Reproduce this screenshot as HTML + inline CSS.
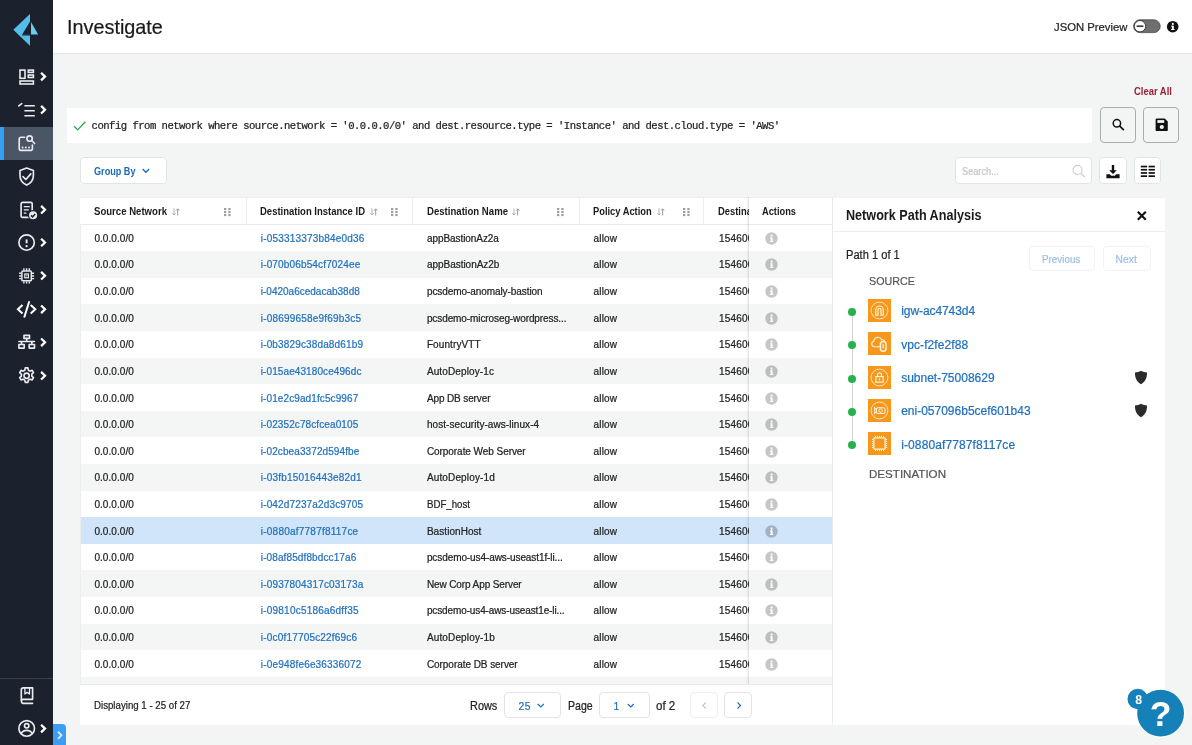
<!DOCTYPE html>
<html lang="en">
<head>
<meta charset="utf-8">
<title>Investigate</title>
<style>
*{box-sizing:border-box;margin:0;padding:0}
html,body{width:1192px;height:745px;overflow:hidden}
body{font-family:"Liberation Sans",sans-serif;background:#f3f5f5;color:#1f1f1f;position:relative;font-size:10px;will-change:transform}
svg{display:block}
#side{position:absolute;left:0;top:0;width:53px;height:745px;background:#1b222e}
#side .act{position:absolute;left:0;top:126.5px;width:53px;height:33.3px;background:#4a5566;border-left:4px solid #37a0f5}
#side svg{position:absolute}
#side .div{position:absolute;left:0;top:678px;width:53px;height:1px;background:#3a414c}
#tab{position:absolute;left:53px;top:724px;width:13px;height:21px;background:#3b9df3;border-radius:0 4px 0 0}
#tab svg{position:absolute;left:0;top:0}
#head{position:absolute;left:53px;top:0;width:1139px;height:54px;background:#fff;border-bottom:1px solid #e4e6e6}
#title{position:absolute;left:67px;top:14px;font-size:20.5px;line-height:24px;color:#1a1a1a;white-space:nowrap}
.t{position:absolute;white-space:nowrap;line-height:1;-webkit-text-stroke:0.22px currentColor}
.card{position:absolute;background:#fff}
.btn{position:absolute;background:#fff;border:1px solid #e1e4e5;border-radius:4px}
.btn svg{position:absolute}
#tbl{position:absolute;left:80px;top:197px;width:752px;height:528px;background:#fff;overflow:hidden}
#thead{position:absolute;left:0;top:0;width:752px;height:28px;border-top:1px solid #eceeee;border-bottom:1px solid #e9ebeb;background:#fff}
.row{position:absolute;left:0;width:752px;height:26.62px;border-left:1px solid #eceeee}
.row.alt{background:#f4f5f5}
.row.sel{background:#d0e5f9}
.c5{position:absolute;left:637px;top:0;width:31.6px;height:488px;overflow:hidden}
.row .inf{position:absolute;left:684.1px;top:7.4px}
.th{position:absolute;top:0;height:26px;border-right:1px solid #eceeee}
.th .srt{position:absolute;top:10.3px}
.th .grp{position:absolute;top:9.8px}
#actcol{position:absolute;left:668px;top:0;width:84px;height:487px;border-left:1px solid rgba(0,0,0,0.10);box-shadow:-1px 0 2px rgba(0,0,0,0.05)}
#actcol:before{content:"";position:absolute;left:0;top:1px;width:84px;height:26px;background:#fff}
#foot{position:absolute;left:0;top:487px;width:752px;height:41px;background:#fff;border-top:1px solid #e9ebeb}
#panel{position:absolute;left:832px;top:197px;width:333px;height:528px;background:#fff;border:1px solid #fff;border-left-color:#e9ebeb;border-top-color:#f1f3f3}
#panel svg{position:absolute}
#help{position:absolute}

</style>
</head>
<body>
<div id="side">
  <div class="act"></div>
  <div class="div"></div>
  <svg width="53" height="745" viewBox="0 0 53 745" style="left:0;top:0">
    <!-- logo -->
    <polygon points="13.3,29.8 30.2,13.7 30.2,46.1" fill="#55bdea"/>
    <polygon points="30.2,21.3 22.2,34.6 30.2,34.6" fill="#1b222e"/>
    <rect x="22.2" y="34.3" width="16" height="1.2" fill="#1b222e"/>
    <rect x="30" y="13" width="1" height="34" fill="#1b222e"/>
    <polygon points="31,22 38.2,34.4 31,34.4" fill="#6fcaf0"/>
    <g fill="none" stroke="#e9ebee" stroke-width="1.65" stroke-linejoin="round" stroke-linecap="round">
      <!-- dashboard -->
      <rect x="20" y="70.1" width="5" height="8.2" stroke-linejoin="miter" stroke-width="1.6"/>
      <rect x="28.3" y="70.1" width="5.1" height="2.3" stroke-linejoin="miter" stroke-width="1.6"/>
      <rect x="28.3" y="75" width="5.1" height="2.5" stroke-linejoin="miter" stroke-width="1.6"/>
      <rect x="20" y="81" width="13.4" height="3" stroke-linejoin="miter" stroke-width="1.6"/>
      <!-- list -->
      <path d="M18.8 105.9l2.9-2.2" />
      <path d="M24.4 105.7h10.4M24.4 110.7h10.4M24.4 115.7h10.4" stroke-linecap="butt"/>
      <!-- investigate -->
      <path d="M24.6 137.2h-3.4a2 2 0 0 0-2 2v9.2a2 2 0 0 0 2 2h9.2a2 2 0 0 0 2-2v-3.4"/>
      <circle cx="29.6" cy="138.5" r="2.7"/>
      <path d="M31.6 140.5l3 3"/>
      <!-- shield -->
      <path d="M26.7 168l6.7 2.6v4.9c0 4.4-2.7 7.7-6.7 9.6c-4-1.900-6.700-5.200-6.700-9.600v-4.900z"/>
      <path d="M23 176.700l2.800 2.800l5-5.600"/>
      <!-- doc check -->
      <path d="M29 217.300h-6.500a1.400 1.400 0 0 1-1.400-1.400v-12.200a1.400 1.400 0 0 1 1.400-1.400h8.300a1.400 1.400 0 0 1 1.400 1.400v6.300"/>
      <path d="M23.800 206.600h6M23.800 209.900h5M23.800 213.200h2.600" stroke-width="1.300" stroke-linecap="butt"/>
      <!-- alert -->
      <circle cx="26.600" cy="242.500" r="7.700"/>
      <path d="M26.6 239.4v3.9" stroke-width="1.9" stroke-linecap="butt"/>
      <!-- chip -->
      <rect x="21.9" y="271.1" width="9.4" height="9.7" rx="0.8" stroke-width="1.5"/>
      <rect x="24.8" y="274" width="3.6" height="3.8" stroke-linejoin="miter" stroke-width="1.2"/>
      <path d="M23.9 270.4v-2.1M26.6 270.4v-2.1M29.3 270.4v-2.1M23.9 281.500v2.100M26.6 281.500v2.100M29.3 281.500v2.100M21.200 273.300h-2.100M21.200 275.950h-2.100M21.200 278.600h-2.100M32 273.300h2.100M32 275.950h2.100M32 278.600h2.100" stroke-width="1.400" stroke-linecap="butt"/>
      <!-- code -->
      <path d="M22.500 305.100l-4.600 4.200l4.600 4.200M30.700 305.100l4.600 4.200l-4.600 4.200M29.300 301.300l-5.100 16.200" stroke="#fff" stroke-width="2" stroke-linecap="butt" stroke-linejoin="miter"/>
      <!-- network -->
      <rect x="24" y="335.400" width="5.500" height="3" />
      <path d="M26.700 338.500v3M18.900 341.500h15.500M21.500 341.500v2.800M31.800 341.500v2.800"/>
      <rect x="18.900" y="344.500" width="5.300" height="3.600"/>
      <rect x="29.200" y="344.500" width="5.300" height="3.600"/>
      <!-- gear -->
      <circle cx="26.600" cy="375.700" r="2.600"/>
      <path id="gear" d="M25.300 367.900h2.600l.5 2.300l1.600.9l2.200-.7l1.300 2.200l-1.700 1.600v1.900l1.700 1.600l-1.300 2.200l-2.200-.7l-1.600.9l-.5 2.300h-2.600l-.5-2.300l-1.600-.9l-2.200.7l-1.300-2.200l1.700-1.600v-1.900l-1.700-1.600l1.300-2.200l2.200.7l1.600-.9z"/>
      <!-- book -->
      <path d="M32.600 699.300h-9.200a2 2 0 0 0 0 4h9.200M32.600 699.300v-11.500h-9.300a2 2 0 0 0-2 2v11.400"/>
      <path d="M24.900 688v6l2.300-1.700l2.300 1.700v-6" stroke-width="1.300"/>
      <!-- user -->
      <circle cx="26.700" cy="728.400" r="7.800"/>
      <circle cx="26.700" cy="725.800" r="2.200"/>
      <path d="M21.200 733.600c1-2.400 3.200-3.300 5.500-3.300s4.500.9 5.500 3.300"/>
    </g>
    <g fill="#e9ebee">
      <circle cx="22.600" cy="147.400" r="1"/><circle cx="25.800" cy="147.400" r="1"/><circle cx="29" cy="147.400" r="1"/>
      <circle cx="26.6" cy="246.2" r="1.15"/>
      <rect x="26.100" y="275.200" width="1.100" height="1.100"/>
      <circle cx="33.100" cy="215.300" r="4.700" stroke="#1b222e" stroke-width="1.300"/>
    </g>
    <path d="M31 215.400l1.500 1.500l2.700-3" fill="none" stroke="#1b222e" stroke-width="1.500"/>
    <!-- chevrons -->
    <g fill="none" stroke="#fff" stroke-width="2.300" stroke-linejoin="miter">
      <path d="M41.1 72.8l3.9 3.8l-3.9 3.8"/>
      <path d="M41.1 105.9l3.9 3.8l-3.9 3.8"/>
      <path d="M41.1 205.9l3.9 3.8l-3.9 3.8"/>
      <path d="M41.1 238.7l3.9 3.8l-3.9 3.8"/>
      <path d="M41.1 271.9l3.9 3.8l-3.9 3.8"/>
      <path d="M41.1 305.5l3.9 3.8l-3.9 3.8"/>
      <path d="M41.1 338.5l3.9 3.8l-3.9 3.8"/>
      <path d="M41.1 371.9l3.9 3.8l-3.9 3.8"/>
      <path d="M41.1 724.8l3.9 3.8l-3.9 3.8"/>
    </g>
  </svg>
</div>
<div id="tab"><svg width="13" height="21" viewBox="0 0 13 21"><path d="M5 7.700l3.400 3.600l-3.400 3.600" stroke="#d6ebfd" stroke-width="1.900" fill="none"/></svg></div>

<div id="head"></div>
<div class="t" style="left:66.9px;top:17px;font-size:20.4px;color:#1a1a1a;transform:scaleX(0.9724);transform-origin:0 0;">Investigate</div><div class="t" style="left:1053.7px;top:22px;font-size:11.8px;color:#222;transform:scaleX(0.9569);transform-origin:0 0;">JSON Preview</div><svg style="position:absolute;left:1132px;top:18px" width="30" height="16" viewBox="0 0 30 16">
<rect x="1.600" y="1.800" width="26.600" height="12.800" rx="6.400" fill="#6f6f6f" stroke="#4a4a4a" stroke-width="0.8"/>
<circle cx="8" cy="8.200" r="5.700" fill="#fff" stroke="#3a3a3a" stroke-width="1"/>
<rect x="4.600" y="7.400" width="6.800" height="1.600" fill="#3a3a3a"/>
</svg>
<svg style="position:absolute;left:1166px;top:20px" width="13" height="13" viewBox="0 0 13 13">
<circle cx="6.700" cy="6.700" r="5.800" fill="#111"/>
<rect x="5.900" y="5.700" width="1.900" height="4" fill="#fff"/><rect x="5.200" y="5.700" width="1.500" height="1" fill="#fff"/><rect x="5.100" y="9" width="3.400" height="1" fill="#fff"/><circle cx="6.800" cy="3.900" r="1.050" fill="#fff"/>
</svg>
<div class="t" style="left:1134.1px;top:87px;font-size:10.4px;font-weight:bold;-webkit-text-stroke:0;color:#9a2036;transform:scaleX(0.9071);transform-origin:0 0;">Clear All</div><div class="card" id="qbar" style="left:67px;top:108px;width:1025px;height:35px"></div>
<svg style="position:absolute;left:72px;top:119px" width="16" height="14" viewBox="0 0 16 14"><path d="M2.200 7.300l3.400 3.600l7.700-8.200" fill="none" stroke="#2aa84a" stroke-width="1.300"/></svg>
<div class="t" style="left:91.6px;top:121px;font-size:10.6px;font-family:'Liberation Mono',monospace;color:#222;letter-spacing:-0.527px;">config from network where source.network = '0.0.0.0/0' and dest.resource.type = 'Instance' and dest.cloud.type = 'AWS'</div><div class="btn" style="left:1100px;top:107px;width:36px;height:36px;border-color:#a9adaf;background:#f3f5f5"><svg style="left:8px;top:6.500px" width="20" height="20" viewBox="0 0 20 20"><circle cx="7.900" cy="8.300" r="3.700" fill="none" stroke="#111" stroke-width="1.500"/><path d="M10.500 10.900l4.400 4.200" stroke="#111" stroke-width="1.700"/></svg></div>
<div class="btn" style="left:1143px;top:107px;width:36px;height:36px;border-color:#a9adaf;background:#f3f5f5"><svg style="left:9.500px;top:9px" width="16" height="16" viewBox="0 0 16 16"><path d="M2.800 1.600h8l3 3v8.300a1.200 1.200 0 0 1-1.200 1.200h-9.800a1.200 1.200 0 0 1-1.200-1.200v-10.100a1.200 1.200 0 0 1 1.200-1.200z" fill="#111"/><rect x="3.400" y="3.100" width="6.800" height="2.800" fill="#f3f5f5"/><circle cx="7.800" cy="10" r="2.100" fill="#f3f5f5"/></svg></div>
<div class="btn" style="left:80px;top:157px;width:86.500px;height:27px"><svg style="left:61px;top:10px" width="8" height="6" viewBox="0 0 8 6"><path d="M0.600 1l3.300 3.300l3.300-3.300" fill="none" stroke="#1c69b6" stroke-width="1.300"/></svg></div>
<div class="t" style="left:93.8px;top:167px;font-size:10.2px;font-weight:bold;-webkit-text-stroke:0;color:#1c69b6;transform:scaleX(0.8940);transform-origin:0 0;">Group By</div><div class="btn" style="left:955px;top:157px;width:137px;height:27px"><svg style="left:113.500px;top:5px" width="18" height="18" viewBox="0 0 18 18"><circle cx="7.500" cy="6.900" r="4.500" fill="none" stroke="#cbcdd0" stroke-width="1.100"/><path d="M10.800 10.300l4.200 4.100" stroke="#cbcdd0" stroke-width="1.200"/></svg></div>
<div class="t" style="left:961.8px;top:166px;font-size:10.5px;color:#c2c5c8;transform:scaleX(0.8755);transform-origin:0 0;">Search...</div><div class="btn" style="left:1099px;top:157px;width:27.500px;height:27px"><svg style="left:5px;top:5.500px" width="16" height="16" viewBox="0 0 16 16"><path d="M6.800 1h2.400v5.200h2.600l-3.800 3.900l-3.800-3.900h2.600z" fill="#111"/><path d="M1.400 10.300h3.400l1.500 1.500h3.400l1.500-1.500h3.400v4h-13.200z" fill="#111"/></svg></div>
<div class="btn" style="left:1133.500px;top:157px;width:27.500px;height:27px"><svg style="left:5.500px;top:6.500px" width="16" height="13" viewBox="0 0 16 13"><g fill="#111"><rect x="0.800" y="0.700" width="6.300" height="1.700"/><rect x="8.600" y="0.700" width="6.300" height="1.700"/><rect x="0.800" y="3.900" width="6.300" height="1.700"/><rect x="8.600" y="3.900" width="6.300" height="1.700"/><rect x="0.800" y="7.100" width="6.300" height="1.700"/><rect x="8.600" y="7.100" width="6.300" height="1.700"/><rect x="0.800" y="10.300" width="6.300" height="1.700"/><rect x="8.600" y="10.300" width="6.300" height="1.700"/></g></svg></div>

<div id="tbl">
<div id="thead">
<div class="th" style="left:0px;width:167px"><div class="t" style="left:13.6px;top:9px;font-size:10px;font-weight:bold;-webkit-text-stroke:0;color:#1a1a1a;transform:scaleX(0.9588);transform-origin:0 0;">Source Network</div><svg class="srt" style="left:91.5px" width="8" height="8" viewBox="0 0 8 8"><path d="M2 0.3v6.6M0.4 5.2L2 7l1.600-1.800" stroke="#b0b3b5" stroke-width="1" fill="none"/><path d="M5.700 7.500v-6.600M4.100 2.600L5.700 0.800l1.600 1.800" stroke="#95999c" stroke-width="1" fill="none"/></svg><svg class="grp" style="left:144.2px" width="7" height="9" viewBox="0 0 7 9"><g fill="#9b9ea1"><rect x="0" y="0" width="2.300" height="2.100"/><rect x="4.300" y="0" width="2.300" height="2.100"/><rect x="0" y="3" width="2.300" height="2.100"/><rect x="4.300" y="3" width="2.300" height="2.100"/><rect x="0" y="6" width="2.300" height="2.100"/><rect x="4.300" y="6" width="2.300" height="2.100"/></g></svg></div>
<div class="th" style="left:167px;width:166px"><div class="t" style="left:13.0px;top:9px;font-size:10px;font-weight:bold;-webkit-text-stroke:0;color:#1a1a1a;transform:scaleX(0.9496);transform-origin:0 0;">Destination Instance ID</div><svg class="srt" style="left:123px" width="8" height="8" viewBox="0 0 8 8"><path d="M2 0.3v6.6M0.4 5.2L2 7l1.600-1.800" stroke="#b0b3b5" stroke-width="1" fill="none"/><path d="M5.700 7.500v-6.600M4.100 2.600L5.700 0.800l1.600 1.800" stroke="#95999c" stroke-width="1" fill="none"/></svg><svg class="grp" style="left:144px" width="7" height="9" viewBox="0 0 7 9"><g fill="#9b9ea1"><rect x="0" y="0" width="2.300" height="2.100"/><rect x="4.300" y="0" width="2.300" height="2.100"/><rect x="0" y="3" width="2.300" height="2.100"/><rect x="4.300" y="3" width="2.300" height="2.100"/><rect x="0" y="6" width="2.300" height="2.100"/><rect x="4.300" y="6" width="2.300" height="2.100"/></g></svg></div>
<div class="th" style="left:333px;width:167px"><div class="t" style="left:13.6px;top:9px;font-size:10px;font-weight:bold;-webkit-text-stroke:0;color:#1a1a1a;transform:scaleX(0.9589);transform-origin:0 0;">Destination Name</div><svg class="srt" style="left:99px" width="8" height="8" viewBox="0 0 8 8"><path d="M2 0.3v6.6M0.4 5.2L2 7l1.600-1.800" stroke="#b0b3b5" stroke-width="1" fill="none"/><path d="M5.700 7.500v-6.600M4.100 2.600L5.700 0.800l1.600 1.800" stroke="#95999c" stroke-width="1" fill="none"/></svg><svg class="grp" style="left:144px" width="7" height="9" viewBox="0 0 7 9"><g fill="#9b9ea1"><rect x="0" y="0" width="2.300" height="2.100"/><rect x="4.300" y="0" width="2.300" height="2.100"/><rect x="0" y="3" width="2.300" height="2.100"/><rect x="4.300" y="3" width="2.300" height="2.100"/><rect x="0" y="6" width="2.300" height="2.100"/><rect x="4.300" y="6" width="2.300" height="2.100"/></g></svg></div>
<div class="th" style="left:500px;width:124px"><div class="t" style="left:12.6px;top:9px;font-size:10px;font-weight:bold;-webkit-text-stroke:0;color:#1a1a1a;transform:scaleX(0.9320);transform-origin:0 0;">Policy Action</div><svg class="srt" style="left:77px" width="8" height="8" viewBox="0 0 8 8"><path d="M2 0.3v6.6M0.4 5.2L2 7l1.600-1.800" stroke="#b0b3b5" stroke-width="1" fill="none"/><path d="M5.700 7.500v-6.600M4.100 2.600L5.700 0.800l1.600 1.800" stroke="#95999c" stroke-width="1" fill="none"/></svg><svg class="grp" style="left:102.60000000000002px" width="7" height="9" viewBox="0 0 7 9"><g fill="#9b9ea1"><rect x="0" y="0" width="2.300" height="2.100"/><rect x="4.300" y="0" width="2.300" height="2.100"/><rect x="0" y="3" width="2.300" height="2.100"/><rect x="4.300" y="3" width="2.300" height="2.100"/><rect x="0" y="6" width="2.300" height="2.100"/><rect x="4.300" y="6" width="2.300" height="2.100"/></g></svg></div>
<div class="th" style="left:625px;width:130px"><div class="t" style="left:12.6px;top:9px;font-size:10px;font-weight:bold;-webkit-text-stroke:0;color:#1a1a1a;transform:scaleX(0.9387);transform-origin:0 0;">Destination Port</div></div>
</div>
<div class="row" style="top:27.40px"><svg class="inf" width="13" height="13" viewBox="0 0 13 13"><circle cx="6.5" cy="6.5" r="6.2" fill="#000" fill-opacity="0.225"/><rect x="5.7" y="5.4" width="1.9" height="4.3" fill="#fff"/><rect x="5" y="5.4" width="1.6" height="1" fill="#fff"/><rect x="4.9" y="9" width="3.4" height="1" fill="#fff"/><circle cx="6.6" cy="3.6" r="1.05" fill="#fff"/></svg></div><div class="t" style="left:14.4px;top:37px;font-size:10px;color:#222;letter-spacing:0.072px;">0.0.0.0/0</div><div class="t" style="left:180.8px;top:37px;font-size:10px;color:#1f70bf;letter-spacing:0.194px;">i-053313373b84e0d36</div><div class="t" style="left:346.9px;top:37px;font-size:10px;color:#222;letter-spacing:-0.065px;">appBastionAz2a</div><div class="t" style="left:513.4px;top:37px;font-size:10px;color:#222;letter-spacing:0.226px;">allow</div><div class="c5"><div class="t" style="left:1.9px;top:37px;font-size:10px;color:#222;letter-spacing:0.194px;">1546006</div></div>
<div class="row alt" style="top:54.02px"><svg class="inf" width="13" height="13" viewBox="0 0 13 13"><circle cx="6.5" cy="6.5" r="6.2" fill="#000" fill-opacity="0.225"/><rect x="5.7" y="5.4" width="1.9" height="4.3" fill="#fff"/><rect x="5" y="5.4" width="1.6" height="1" fill="#fff"/><rect x="4.9" y="9" width="3.4" height="1" fill="#fff"/><circle cx="6.6" cy="3.6" r="1.05" fill="#fff"/></svg></div><div class="t" style="left:14.4px;top:63px;font-size:10px;color:#222;letter-spacing:0.072px;">0.0.0.0/0</div><div class="t" style="left:180.8px;top:63px;font-size:10px;color:#1f70bf;letter-spacing:0.152px;">i-070b06b54cf7024ee</div><div class="t" style="left:346.9px;top:63px;font-size:10px;color:#222;letter-spacing:-0.026px;">appBastionAz2b</div><div class="t" style="left:513.4px;top:63px;font-size:10px;color:#222;letter-spacing:0.226px;">allow</div><div class="c5"><div class="t" style="left:1.9px;top:63px;font-size:10px;color:#222;letter-spacing:0.194px;">1546006</div></div>
<div class="row" style="top:80.64px"><svg class="inf" width="13" height="13" viewBox="0 0 13 13"><circle cx="6.5" cy="6.5" r="6.2" fill="#000" fill-opacity="0.225"/><rect x="5.7" y="5.4" width="1.9" height="4.3" fill="#fff"/><rect x="5" y="5.4" width="1.6" height="1" fill="#fff"/><rect x="4.9" y="9" width="3.4" height="1" fill="#fff"/><circle cx="6.6" cy="3.6" r="1.05" fill="#fff"/></svg></div><div class="t" style="left:14.4px;top:90px;font-size:10px;color:#222;letter-spacing:0.072px;">0.0.0.0/0</div><div class="t" style="left:180.8px;top:90px;font-size:10px;color:#1f70bf;letter-spacing:0.001px;">i-0420a6cedacab38d8</div><div class="t" style="left:346.9px;top:90px;font-size:10px;color:#222;letter-spacing:-0.072px;">pcsdemo-anomaly-bastion</div><div class="t" style="left:513.4px;top:90px;font-size:10px;color:#222;letter-spacing:0.226px;">allow</div><div class="c5"><div class="t" style="left:1.9px;top:90px;font-size:10px;color:#222;letter-spacing:0.194px;">1546006</div></div>
<div class="row alt" style="top:107.26px"><svg class="inf" width="13" height="13" viewBox="0 0 13 13"><circle cx="6.5" cy="6.5" r="6.2" fill="#000" fill-opacity="0.225"/><rect x="5.7" y="5.4" width="1.9" height="4.3" fill="#fff"/><rect x="5" y="5.4" width="1.6" height="1" fill="#fff"/><rect x="4.9" y="9" width="3.4" height="1" fill="#fff"/><circle cx="6.6" cy="3.6" r="1.05" fill="#fff"/></svg></div><div class="t" style="left:14.4px;top:117px;font-size:10px;color:#222;letter-spacing:0.072px;">0.0.0.0/0</div><div class="t" style="left:180.8px;top:117px;font-size:10px;color:#1f70bf;letter-spacing:0.196px;">i-08699658e9f69b3c5</div><div class="t" style="left:346.9px;top:117px;font-size:10px;color:#222;letter-spacing:-0.095px;">pcsdemo-microseg-wordpress...</div><div class="t" style="left:513.4px;top:117px;font-size:10px;color:#222;letter-spacing:0.226px;">allow</div><div class="c5"><div class="t" style="left:1.9px;top:117px;font-size:10px;color:#222;letter-spacing:0.194px;">1546006</div></div>
<div class="row" style="top:133.88px"><svg class="inf" width="13" height="13" viewBox="0 0 13 13"><circle cx="6.5" cy="6.5" r="6.2" fill="#000" fill-opacity="0.225"/><rect x="5.7" y="5.4" width="1.9" height="4.3" fill="#fff"/><rect x="5" y="5.4" width="1.6" height="1" fill="#fff"/><rect x="4.9" y="9" width="3.4" height="1" fill="#fff"/><circle cx="6.6" cy="3.6" r="1.05" fill="#fff"/></svg></div><div class="t" style="left:14.4px;top:143px;font-size:10px;color:#222;letter-spacing:0.072px;">0.0.0.0/0</div><div class="t" style="left:180.8px;top:143px;font-size:10px;color:#1f70bf;letter-spacing:0.147px;">i-0b3829c38da8d61b9</div><div class="t" style="left:346.9px;top:143px;font-size:10px;color:#222;letter-spacing:0.100px;">FountryVTT</div><div class="t" style="left:513.4px;top:143px;font-size:10px;color:#222;letter-spacing:0.226px;">allow</div><div class="c5"><div class="t" style="left:1.9px;top:143px;font-size:10px;color:#222;letter-spacing:0.194px;">1546006</div></div>
<div class="row alt" style="top:160.50px"><svg class="inf" width="13" height="13" viewBox="0 0 13 13"><circle cx="6.5" cy="6.5" r="6.2" fill="#000" fill-opacity="0.225"/><rect x="5.7" y="5.4" width="1.9" height="4.3" fill="#fff"/><rect x="5" y="5.4" width="1.6" height="1" fill="#fff"/><rect x="4.9" y="9" width="3.4" height="1" fill="#fff"/><circle cx="6.6" cy="3.6" r="1.05" fill="#fff"/></svg></div><div class="t" style="left:14.4px;top:170px;font-size:10px;color:#222;letter-spacing:0.072px;">0.0.0.0/0</div><div class="t" style="left:180.8px;top:170px;font-size:10px;color:#1f70bf;letter-spacing:0.090px;">i-015ae43180ce496dc</div><div class="t" style="left:346.9px;top:170px;font-size:10px;color:#222;letter-spacing:0.126px;">AutoDeploy-1c</div><div class="t" style="left:513.4px;top:170px;font-size:10px;color:#222;letter-spacing:0.226px;">allow</div><div class="c5"><div class="t" style="left:1.9px;top:170px;font-size:10px;color:#222;letter-spacing:0.194px;">1546006</div></div>
<div class="row" style="top:187.12px"><svg class="inf" width="13" height="13" viewBox="0 0 13 13"><circle cx="6.5" cy="6.5" r="6.2" fill="#000" fill-opacity="0.225"/><rect x="5.7" y="5.4" width="1.9" height="4.3" fill="#fff"/><rect x="5" y="5.4" width="1.6" height="1" fill="#fff"/><rect x="4.9" y="9" width="3.4" height="1" fill="#fff"/><circle cx="6.6" cy="3.6" r="1.05" fill="#fff"/></svg></div><div class="t" style="left:14.4px;top:197px;font-size:10px;color:#222;letter-spacing:0.072px;">0.0.0.0/0</div><div class="t" style="left:180.8px;top:197px;font-size:10px;color:#1f70bf;letter-spacing:0.098px;">i-01e2c9ad1fc5c9967</div><div class="t" style="left:346.9px;top:197px;font-size:10px;color:#222;letter-spacing:-0.119px;">App DB server</div><div class="t" style="left:513.4px;top:197px;font-size:10px;color:#222;letter-spacing:0.226px;">allow</div><div class="c5"><div class="t" style="left:1.9px;top:197px;font-size:10px;color:#222;letter-spacing:0.194px;">1546006</div></div>
<div class="row alt" style="top:213.74px"><svg class="inf" width="13" height="13" viewBox="0 0 13 13"><circle cx="6.5" cy="6.5" r="6.2" fill="#000" fill-opacity="0.225"/><rect x="5.7" y="5.4" width="1.9" height="4.3" fill="#fff"/><rect x="5" y="5.4" width="1.6" height="1" fill="#fff"/><rect x="4.9" y="9" width="3.4" height="1" fill="#fff"/><circle cx="6.6" cy="3.6" r="1.05" fill="#fff"/></svg></div><div class="t" style="left:14.4px;top:223px;font-size:10px;color:#222;letter-spacing:0.072px;">0.0.0.0/0</div><div class="t" style="left:180.8px;top:223px;font-size:10px;color:#1f70bf;letter-spacing:0.098px;">i-02352c78cfcea0105</div><div class="t" style="left:346.9px;top:223px;font-size:10px;color:#222;letter-spacing:0.067px;">host-security-aws-linux-4</div><div class="t" style="left:513.4px;top:223px;font-size:10px;color:#222;letter-spacing:0.226px;">allow</div><div class="c5"><div class="t" style="left:1.9px;top:223px;font-size:10px;color:#222;letter-spacing:0.194px;">1546006</div></div>
<div class="row" style="top:240.36px"><svg class="inf" width="13" height="13" viewBox="0 0 13 13"><circle cx="6.5" cy="6.5" r="6.2" fill="#000" fill-opacity="0.225"/><rect x="5.7" y="5.4" width="1.9" height="4.3" fill="#fff"/><rect x="5" y="5.4" width="1.6" height="1" fill="#fff"/><rect x="4.9" y="9" width="3.4" height="1" fill="#fff"/><circle cx="6.6" cy="3.6" r="1.05" fill="#fff"/></svg></div><div class="t" style="left:14.4px;top:250px;font-size:10px;color:#222;letter-spacing:0.072px;">0.0.0.0/0</div><div class="t" style="left:180.8px;top:250px;font-size:10px;color:#1f70bf;letter-spacing:0.096px;">i-02cbea3372d594fbe</div><div class="t" style="left:346.9px;top:250px;font-size:10px;color:#222;letter-spacing:-0.056px;">Corporate Web Server</div><div class="t" style="left:513.4px;top:250px;font-size:10px;color:#222;letter-spacing:0.226px;">allow</div><div class="c5"><div class="t" style="left:1.9px;top:250px;font-size:10px;color:#222;letter-spacing:0.194px;">1546006</div></div>
<div class="row alt" style="top:266.98px"><svg class="inf" width="13" height="13" viewBox="0 0 13 13"><circle cx="6.5" cy="6.5" r="6.2" fill="#000" fill-opacity="0.225"/><rect x="5.7" y="5.4" width="1.9" height="4.3" fill="#fff"/><rect x="5" y="5.4" width="1.6" height="1" fill="#fff"/><rect x="4.9" y="9" width="3.4" height="1" fill="#fff"/><circle cx="6.6" cy="3.6" r="1.05" fill="#fff"/></svg></div><div class="t" style="left:14.4px;top:276px;font-size:10px;color:#222;letter-spacing:0.072px;">0.0.0.0/0</div><div class="t" style="left:180.8px;top:276px;font-size:10px;color:#1f70bf;letter-spacing:0.198px;">i-03fb15016443e82d1</div><div class="t" style="left:346.9px;top:276px;font-size:10px;color:#222;letter-spacing:0.145px;">AutoDeploy-1d</div><div class="t" style="left:513.4px;top:276px;font-size:10px;color:#222;letter-spacing:0.226px;">allow</div><div class="c5"><div class="t" style="left:1.9px;top:276px;font-size:10px;color:#222;letter-spacing:0.194px;">1546006</div></div>
<div class="row" style="top:293.60px"><svg class="inf" width="13" height="13" viewBox="0 0 13 13"><circle cx="6.5" cy="6.5" r="6.2" fill="#000" fill-opacity="0.225"/><rect x="5.7" y="5.4" width="1.9" height="4.3" fill="#fff"/><rect x="5" y="5.4" width="1.6" height="1" fill="#fff"/><rect x="4.9" y="9" width="3.4" height="1" fill="#fff"/><circle cx="6.6" cy="3.6" r="1.05" fill="#fff"/></svg></div><div class="t" style="left:14.4px;top:303px;font-size:10px;color:#222;letter-spacing:0.072px;">0.0.0.0/0</div><div class="t" style="left:180.8px;top:303px;font-size:10px;color:#1f70bf;letter-spacing:0.147px;">i-042d7237a2d3c9705</div><div class="t" style="left:346.9px;top:303px;font-size:10px;color:#222;transform:scaleX(0.9670);transform-origin:0 0;">BDF_host</div><div class="t" style="left:513.4px;top:303px;font-size:10px;color:#222;letter-spacing:0.226px;">allow</div><div class="c5"><div class="t" style="left:1.9px;top:303px;font-size:10px;color:#222;letter-spacing:0.194px;">1546006</div></div>
<div class="row alt sel" style="top:320.22px"><svg class="inf" width="13" height="13" viewBox="0 0 13 13"><circle cx="6.5" cy="6.5" r="6.2" fill="#000" fill-opacity="0.225"/><rect x="5.7" y="5.4" width="1.9" height="4.3" fill="#fff"/><rect x="5" y="5.4" width="1.6" height="1" fill="#fff"/><rect x="4.9" y="9" width="3.4" height="1" fill="#fff"/><circle cx="6.6" cy="3.6" r="1.05" fill="#fff"/></svg></div><div class="t" style="left:14.4px;top:330px;font-size:10px;color:#222;letter-spacing:0.072px;">0.0.0.0/0</div><div class="t" style="left:180.8px;top:330px;font-size:10px;color:#1f70bf;letter-spacing:0.231px;">i-0880af7787f8117ce</div><div class="t" style="left:346.9px;top:330px;font-size:10px;color:#222;letter-spacing:0.058px;">BastionHost</div><div class="t" style="left:513.4px;top:330px;font-size:10px;color:#222;letter-spacing:0.226px;">allow</div><div class="c5"><div class="t" style="left:1.9px;top:330px;font-size:10px;color:#222;letter-spacing:0.194px;">1546006</div></div>
<div class="row" style="top:346.84px"><svg class="inf" width="13" height="13" viewBox="0 0 13 13"><circle cx="6.5" cy="6.5" r="6.2" fill="#000" fill-opacity="0.225"/><rect x="5.7" y="5.4" width="1.9" height="4.3" fill="#fff"/><rect x="5" y="5.4" width="1.6" height="1" fill="#fff"/><rect x="4.9" y="9" width="3.4" height="1" fill="#fff"/><circle cx="6.6" cy="3.6" r="1.05" fill="#fff"/></svg></div><div class="t" style="left:14.4px;top:356px;font-size:10px;color:#222;letter-spacing:0.072px;">0.0.0.0/0</div><div class="t" style="left:180.8px;top:356px;font-size:10px;color:#1f70bf;letter-spacing:0.115px;">i-08af85df8bdcc17a6</div><div class="t" style="left:346.9px;top:356px;font-size:10px;color:#222;letter-spacing:-0.086px;">pcsdemo-us4-aws-useast1f-li...</div><div class="t" style="left:513.4px;top:356px;font-size:10px;color:#222;letter-spacing:0.226px;">allow</div><div class="c5"><div class="t" style="left:1.9px;top:356px;font-size:10px;color:#222;letter-spacing:0.194px;">1546006</div></div>
<div class="row alt" style="top:373.46px"><svg class="inf" width="13" height="13" viewBox="0 0 13 13"><circle cx="6.5" cy="6.5" r="6.2" fill="#000" fill-opacity="0.225"/><rect x="5.7" y="5.4" width="1.9" height="4.3" fill="#fff"/><rect x="5" y="5.4" width="1.6" height="1" fill="#fff"/><rect x="4.9" y="9" width="3.4" height="1" fill="#fff"/><circle cx="6.6" cy="3.6" r="1.05" fill="#fff"/></svg></div><div class="t" style="left:14.4px;top:383px;font-size:10px;color:#222;letter-spacing:0.072px;">0.0.0.0/0</div><div class="t" style="left:180.8px;top:383px;font-size:10px;color:#1f70bf;letter-spacing:0.164px;">i-0937804317c03173a</div><div class="t" style="left:346.9px;top:383px;font-size:10px;color:#222;letter-spacing:-0.107px;">New Corp App Server</div><div class="t" style="left:513.4px;top:383px;font-size:10px;color:#222;letter-spacing:0.226px;">allow</div><div class="c5"><div class="t" style="left:1.9px;top:383px;font-size:10px;color:#222;letter-spacing:0.194px;">1546006</div></div>
<div class="row" style="top:400.08px"><svg class="inf" width="13" height="13" viewBox="0 0 13 13"><circle cx="6.5" cy="6.5" r="6.2" fill="#000" fill-opacity="0.225"/><rect x="5.7" y="5.4" width="1.9" height="4.3" fill="#fff"/><rect x="5" y="5.4" width="1.6" height="1" fill="#fff"/><rect x="4.9" y="9" width="3.4" height="1" fill="#fff"/><circle cx="6.6" cy="3.6" r="1.05" fill="#fff"/></svg></div><div class="t" style="left:14.4px;top:409px;font-size:10px;color:#222;letter-spacing:0.072px;">0.0.0.0/0</div><div class="t" style="left:180.8px;top:409px;font-size:10px;color:#1f70bf;letter-spacing:0.217px;">i-09810c5186a6dff35</div><div class="t" style="left:346.9px;top:409px;font-size:10px;color:#222;letter-spacing:-0.120px;">pcsdemo-us4-aws-useast1e-li...</div><div class="t" style="left:513.4px;top:409px;font-size:10px;color:#222;letter-spacing:0.226px;">allow</div><div class="c5"><div class="t" style="left:1.9px;top:409px;font-size:10px;color:#222;letter-spacing:0.194px;">1546006</div></div>
<div class="row alt" style="top:426.70px"><svg class="inf" width="13" height="13" viewBox="0 0 13 13"><circle cx="6.5" cy="6.5" r="6.2" fill="#000" fill-opacity="0.225"/><rect x="5.7" y="5.4" width="1.9" height="4.3" fill="#fff"/><rect x="5" y="5.4" width="1.6" height="1" fill="#fff"/><rect x="4.9" y="9" width="3.4" height="1" fill="#fff"/><circle cx="6.6" cy="3.6" r="1.05" fill="#fff"/></svg></div><div class="t" style="left:14.4px;top:436px;font-size:10px;color:#222;letter-spacing:0.072px;">0.0.0.0/0</div><div class="t" style="left:180.8px;top:436px;font-size:10px;color:#1f70bf;letter-spacing:0.191px;">i-0c0f17705c22f69c6</div><div class="t" style="left:346.9px;top:436px;font-size:10px;color:#222;letter-spacing:0.145px;">AutoDeploy-1b</div><div class="t" style="left:513.4px;top:436px;font-size:10px;color:#222;letter-spacing:0.226px;">allow</div><div class="c5"><div class="t" style="left:1.9px;top:436px;font-size:10px;color:#222;letter-spacing:0.194px;">1546006</div></div>
<div class="row" style="top:453.32px"><svg class="inf" width="13" height="13" viewBox="0 0 13 13"><circle cx="6.5" cy="6.5" r="6.2" fill="#000" fill-opacity="0.225"/><rect x="5.7" y="5.4" width="1.9" height="4.3" fill="#fff"/><rect x="5" y="5.4" width="1.6" height="1" fill="#fff"/><rect x="4.9" y="9" width="3.4" height="1" fill="#fff"/><circle cx="6.6" cy="3.6" r="1.05" fill="#fff"/></svg></div><div class="t" style="left:14.4px;top:463px;font-size:10px;color:#222;letter-spacing:0.072px;">0.0.0.0/0</div><div class="t" style="left:180.8px;top:463px;font-size:10px;color:#1f70bf;letter-spacing:0.182px;">i-0e948fe6e36336072</div><div class="t" style="left:346.9px;top:463px;font-size:10px;color:#222;letter-spacing:-0.050px;">Corporate DB server</div><div class="t" style="left:513.4px;top:463px;font-size:10px;color:#222;letter-spacing:0.226px;">allow</div><div class="c5"><div class="t" style="left:1.9px;top:463px;font-size:10px;color:#222;letter-spacing:0.194px;">1546006</div></div>
<div class="row alt" style="top:479.94px"></div><div class="t" style="left:14.4px;top:489px;font-size:10px;color:#222;letter-spacing:0.072px;">0.0.0.0/0</div><div class="t" style="left:180.8px;top:489px;font-size:10px;color:#1f70bf;letter-spacing:0.351px;">i-0f1a2b3c4d5e6f708</div><div class="t" style="left:346.9px;top:489px;font-size:10px;color:#222;letter-spacing:-0.098px;">Corporate App server</div><div class="t" style="left:513.4px;top:489px;font-size:10px;color:#222;letter-spacing:0.226px;">allow</div><div class="c5"><div class="t" style="left:1.9px;top:489px;font-size:10px;color:#222;letter-spacing:0.194px;">1546006</div></div>
<div id="actcol"><div class="t" style="left:13.1px;top:10px;font-size:10px;font-weight:bold;-webkit-text-stroke:0;color:#1a1a1a;transform:scaleX(0.9271);transform-origin:0 0;">Actions</div></div>
<div id="foot"><div class="t" style="left:13.8px;top:16px;font-size:10px;color:#222;transform:scaleX(0.9677);transform-origin:0 0;">Displaying 1 - 25 of 27</div><div class="t" style="left:389.8px;top:15px;font-size:12.2px;color:#222;transform:scaleX(0.8955);transform-origin:0 0;">Rows</div><div class="btn" style="left:424.300px;top:7.300px;width:56.500px;height:25.700px"><svg style="left:32px;top:10px" width="8" height="6" viewBox="0 0 8 6"><path d="M0.800 1l3 3l3-3" fill="none" stroke="#1f70bf" stroke-width="1.200"/></svg></div><div class="t" style="left:438.6px;top:17px;font-size:10.3px;color:#1f70bf;letter-spacing:0.331px;">25</div><div class="t" style="left:487.5px;top:15px;font-size:12.2px;color:#222;transform:scaleX(0.8676);transform-origin:0 0;">Page</div><div class="btn" style="left:519px;top:7.300px;width:50.500px;height:25.700px"><svg style="left:26.500px;top:10px" width="8" height="6" viewBox="0 0 8 6"><path d="M0.800 1l3 3l3-3" fill="none" stroke="#1f70bf" stroke-width="1.200"/></svg></div><div class="t" style="left:533.4px;top:17px;font-size:10.3px;color:#1f70bf;">1</div><div class="t" style="left:576.1px;top:15px;font-size:12.2px;color:#222;transform:scaleX(0.9487);transform-origin:0 0;">of 2</div><div class="btn" style="left:609.500px;top:7.300px;width:28px;height:25.700px;border-color:#eef0f1"><svg style="left:10.500px;top:8px" width="7" height="9" viewBox="0 0 7 9"><path d="M4.800 1.300l-3 3.200l3 3.200" fill="none" stroke="#a9c7e6" stroke-width="1.100"/></svg></div><div class="btn" style="left:644px;top:7.300px;width:28px;height:25.700px"><svg style="left:11px;top:8px" width="7" height="9" viewBox="0 0 7 9"><path d="M1.500 1.300l3 3.200l-3 3.200" fill="none" stroke="#1f70bf" stroke-width="1.200"/></svg></div></div>
</div>
<div id="panel"><div style="position:absolute;left:0;top:33px;width:333px;height:1px;background:#eceeee"></div><div class="t" style="left:13.3px;top:10px;font-size:14.2px;font-weight:bold;-webkit-text-stroke:0;color:#1a1a1a;transform:scaleX(0.8889);transform-origin:0 0;">Network Path Analysis</div><svg style="left:302.500px;top:11.500px" width="12" height="12" viewBox="0 0 12 12"><path d="M1.800 1.800l8 8M9.800 1.800l-8 8" stroke="#111" stroke-width="2.100"/></svg><div class="t" style="left:13.3px;top:51px;font-size:12.3px;color:#222;transform:scaleX(0.9044);transform-origin:0 0;">Path 1 of 1</div><div class="btn" style="left:196px;top:48px;width:66px;height:25px;border-color:#f0f2f3"></div><div class="btn" style="left:269.500px;top:48px;width:48.500px;height:25px;border-color:#f0f2f3"></div><div class="t" style="left:209.4px;top:57px;font-size:10.2px;color:#9fc0e3;transform:scaleX(0.9662);transform-origin:0 0;">Previous</div><div class="t" style="left:282.5px;top:57px;font-size:10.2px;color:#9fc0e3;letter-spacing:0.149px;">Next</div><div class="t" style="left:36.1px;top:78px;font-size:11.8px;color:#555;transform:scaleX(0.9092);transform-origin:0 0;">SOURCE</div><div style="position:absolute;left:18.500px;top:114px;width:1px;height:134px;background:#cfd2d4"></div><div style="position:absolute;left:14.9px;top:110.0px;width:8px;height:8px;border-radius:4px;background:#27b14b"></div><div style="position:absolute;left:35.0px;top:100.8px;width:23px;height:23px;background:#f7981d"><svg style="left:0;top:0" width="23" height="23" viewBox="0 0 23 23"><circle cx="11.500" cy="11.500" r="8.400" fill="none" stroke="#ffe7c2" stroke-width="1"/><path d="M7.700 16.200v-5.400a3.800 3.800 0 0 1 7.600 0v5.400h-2.300v-5.400a1.500 1.500 0 0 0-3 0v5.400z" fill="#f7981d" stroke="#fff3dd" stroke-width="1.200" stroke-linejoin="round"/></svg></div><div class="t" style="left:68.2px;top:107px;font-size:12px;color:#1f70bf;letter-spacing:-0.074px;">igw-ac4743d4</div><div style="position:absolute;left:14.9px;top:143.4px;width:8px;height:8px;border-radius:4px;background:#27b14b"></div><div style="position:absolute;left:35.0px;top:134.2px;width:23px;height:23px;background:#f7981d"><svg style="left:0;top:0" width="23" height="23" viewBox="0 0 23 23"><path d="M12 14.800h-5.600a2.900 2.900 0 0 1-0.500-5.700a4 4 0 0 1 7.700-1.300a3.200 3.200 0 0 1 3.300 1.600" fill="none" stroke="#fff3dd" stroke-width="1.100"/><rect x="12.400" y="9.600" width="5.600" height="9.600" rx="2.800" fill="#f7981d" stroke="#fff3dd" stroke-width="1.500"/><rect x="14.500" y="12" width="1.400" height="4.600" rx="0.700" fill="#fff3dd"/></svg></div><div class="t" style="left:68.2px;top:141px;font-size:12px;color:#1f70bf;letter-spacing:0.078px;">vpc-f2fe2f88</div><div style="position:absolute;left:14.9px;top:176.7px;width:8px;height:8px;border-radius:4px;background:#27b14b"></div><div style="position:absolute;left:35.0px;top:167.5px;width:23px;height:23px;background:#f7981d"><svg style="left:0;top:0" width="23" height="23" viewBox="0 0 23 23"><circle cx="11.500" cy="11.500" r="8.400" fill="none" stroke="#ffe7c2" stroke-width="1"/><rect x="7.800" y="10.600" width="7.400" height="5.600" fill="none" stroke="#fff3dd" stroke-width="1.200"/><path d="M9.500 10.600v-1.800a2 2 0 0 1 4 0v1.800" fill="none" stroke="#fff3dd" stroke-width="1.200"/><rect x="10.900" y="12.300" width="1.200" height="2.200" fill="#fff3dd"/></svg></div><div class="t" style="left:68.2px;top:174px;font-size:12px;color:#1f70bf;letter-spacing:-0.002px;">subnet-75008629</div><svg style="left:300.8px;top:171.7px" width="14" height="15" viewBox="0 0 14 15"><path d="M7 0.800c2 1.300 4 1.700 6 1.700c0.200 5-1.500 9.200-6 11.700c-4.500-2.500-6.200-6.700-6-11.700c2 0 4-0.400 6-1.700z" fill="#2b2b2b"/></svg><div style="position:absolute;left:14.9px;top:210.1px;width:8px;height:8px;border-radius:4px;background:#27b14b"></div><div style="position:absolute;left:35.0px;top:200.9px;width:23px;height:23px;background:#f7981d"><svg style="left:0;top:0" width="23" height="23" viewBox="0 0 23 23"><circle cx="11.500" cy="11.500" r="8.400" fill="none" stroke="#ffe7c2" stroke-width="1"/><rect x="8.400" y="8.700" width="8.600" height="5.800" rx="1.400" fill="none" stroke="#fff3dd" stroke-width="1.100"/><circle cx="12.600" cy="11.600" r="1.700" fill="none" stroke="#fff3dd" stroke-width="1"/><path d="M6.600 8v7.300M6.600 9.700h1.800M6.600 13.500h1.800" stroke="#fff3dd" stroke-width="1.100" fill="none"/></svg></div><div class="t" style="left:68.2px;top:207px;font-size:12px;color:#1f70bf;letter-spacing:-0.003px;">eni-057096b5cef601b43</div><svg style="left:300.8px;top:205.1px" width="14" height="15" viewBox="0 0 14 15"><path d="M7 0.800c2 1.300 4 1.700 6 1.700c0.200 5-1.500 9.200-6 11.700c-4.500-2.500-6.200-6.700-6-11.700c2 0 4-0.400 6-1.700z" fill="#2b2b2b"/></svg><div style="position:absolute;left:14.9px;top:243.4px;width:8px;height:8px;border-radius:4px;background:#27b14b"></div><div style="position:absolute;left:35.0px;top:234.2px;width:23px;height:23px;background:#f7981d"><svg style="left:0;top:0" width="23" height="23" viewBox="0 0 23 23"><rect x="5.900" y="5.900" width="11.200" height="11.200" rx="0.800" fill="none" stroke="#fff3dd" stroke-width="1.300"/><path d="M7.500 5.300v-1.400M9.500 5.300v-1.400M11.500 5.300v-1.400M13.500 5.300v-1.400M15.500 5.300v-1.400M7.500 17.700v1.400M9.500 17.700v1.400M11.500 17.700v1.400M13.500 17.700v1.400M15.500 17.700v1.400M5.300 7.500h-1.400M5.300 9.500h-1.400M5.300 11.500h-1.400M5.300 13.500h-1.400M5.300 15.500h-1.400M17.700 7.500h1.400M17.700 9.500h1.400M17.700 11.500h1.400M17.700 13.500h1.400M17.700 15.500h1.400" stroke="#fff3dd" stroke-width="1" fill="none"/></svg></div><div class="t" style="left:68.2px;top:241px;font-size:12px;color:#1f70bf;letter-spacing:0.112px;">i-0880af7787f8117ce</div><div class="t" style="left:36.1px;top:271px;font-size:11.8px;color:#555;transform:scaleX(0.9817);transform-origin:0 0;">DESTINATION</div></div>
<svg id="help" style="left:1120px;top:680px" width="72" height="65" viewBox="0 0 72 65">
<circle cx="40.600" cy="33.200" r="24.200" fill="#fff" opacity="0.85"/>
<circle cx="17.700" cy="19" r="11.100" fill="#fff" opacity="0.85"/>
<circle cx="40.600" cy="33.200" r="23.400" fill="#1680b9"/>
<circle cx="17.700" cy="19" r="10.200" fill="#1680b9"/>
<text x="18.700" y="24" font-family="Liberation Sans, sans-serif" font-size="12.300" font-weight="bold" fill="#fff" text-anchor="middle">8</text>
<text x="40.600" y="46.300" font-family="Liberation Sans, sans-serif" font-size="35.500" font-weight="bold" fill="#fff" text-anchor="middle">?</text>
</svg>
</body>
</html>
